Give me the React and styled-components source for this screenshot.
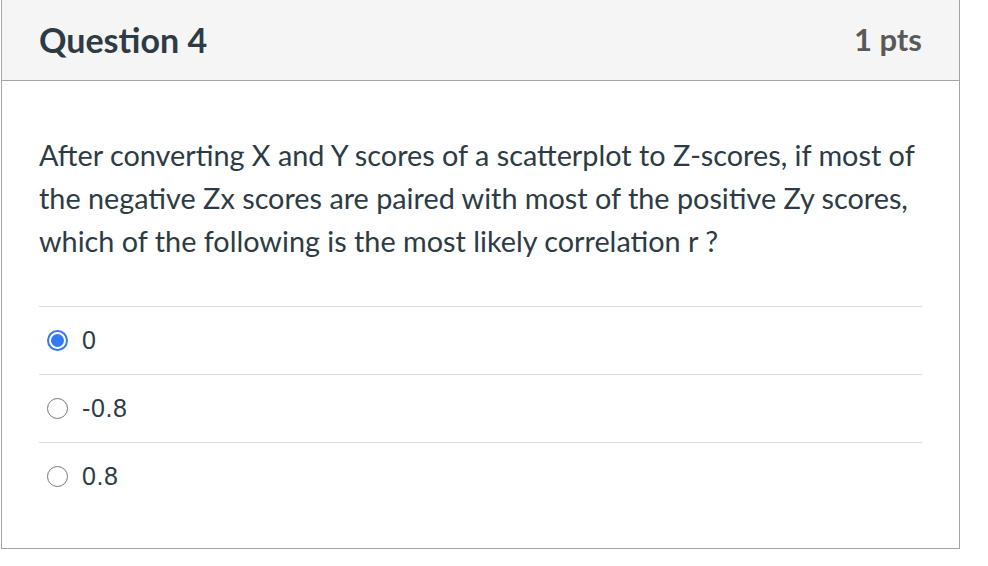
import React, { useState } from 'react';
import styled, { createGlobalStyle } from 'styled-components';

const GlobalStyle = createGlobalStyle`
  body {
    margin: 0;
    background: #ffffff;
    font-family: Lato, "Open Sans", sans-serif;
  }
`;

const QuestionBox = styled.div`
  box-sizing: border-box;
  width: 959px;
  margin-left: 1px;
  border: 1px solid #a5a5a5;
  border-top: none;
  background: #ffffff;
`;

const Header = styled.div`
  box-sizing: border-box;
  height: 81px;
  padding: 0 37px 2px 37px;
  display: flex;
  align-items: center;
  justify-content: space-between;
  background: #f5f5f5;
  border-bottom: 1px solid #a5a5a5;
`;

const Title = styled.h2`
  margin: 0;
  font-family: Lato, sans-serif;
  font-weight: 700;
  font-size: 34px;
  color: #2d3b45;
`;

const Points = styled.div`
  font-family: Lato, sans-serif;
  font-weight: 700;
  font-size: 31px;
  color: #595959;
`;

const Body = styled.div`
  padding: 53px 37px 38px 37px;
`;

const Prompt = styled.p`
  margin: 0 0 43px 0;
  font-family: Lato, sans-serif;
  font-size: 28.8px;
  line-height: 43px;
  color: #2d3b45;
`;

const Options = styled.div`
  display: flex;
  flex-direction: column;
`;

const OptionRow = styled.label`
  display: flex;
  align-items: center;
  gap: 14px;
  height: 68px;
  box-sizing: border-box;
  padding-left: 8px;
  border-top: 1px solid #dddddd;
  cursor: pointer;
`;

const Radio = styled.span`
  box-sizing: border-box;
  width: 21px;
  height: 21px;
  border-radius: 50%;
  border: ${(p) => (p.checked ? '2px solid #3478f6' : '1.5px solid #767676')};
  display: flex;
  align-items: center;
  justify-content: center;
  background: #fff;
  &::after {
    content: '';
    display: ${(p) => (p.checked ? 'block' : 'none')};
    width: 13px;
    height: 13px;
    border-radius: 50%;
    background: #3478f6;
  }
`;

const OptionText = styled.span`
  font-family: "Liberation Sans", Arial, sans-serif;
  font-size: 25px;
  letter-spacing: 0.6px;
  color: #2d3b45;
`;

const answers = ['0', '-0.8', '0.8'];

export default function App() {
  const [selected, setSelected] = useState(0);
  return (
    <>
      <GlobalStyle />
      <QuestionBox>
        <Header>
          <Title>Question 4</Title>
          <Points>1 pts</Points>
        </Header>
        <Body>
          <Prompt>
            After converting X and Y scores of a scatterplot to Z-scores, if most of
            the negative Zx scores are paired with most of the positive Zy scores,
            which of the following is the most likely correlation r ?
          </Prompt>
          <Options>
            {answers.map((a, i) => (
              <OptionRow key={a} onClick={() => setSelected(i)}>
                <Radio checked={selected === i} />
                <OptionText>{a}</OptionText>
              </OptionRow>
            ))}
          </Options>
        </Body>
      </QuestionBox>
    </>
  );
}
